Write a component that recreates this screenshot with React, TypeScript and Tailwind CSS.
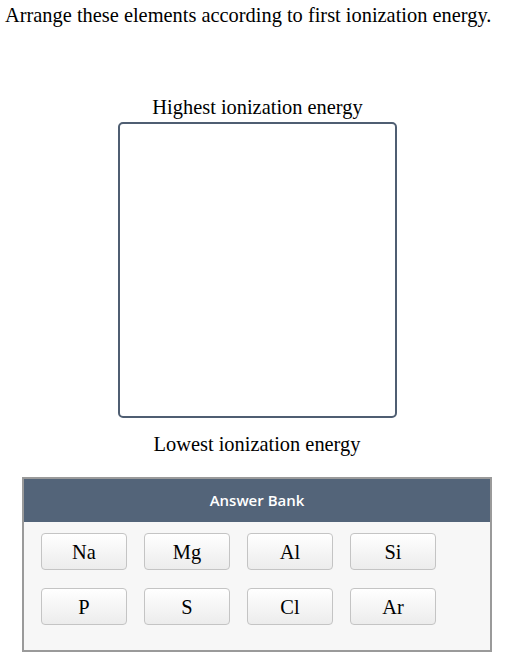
const elements = [
  ["Na", "Mg", "Al", "Si"],
  ["P", "S", "Cl", "Ar"],
];

export default function App() {
  return (
    <div className="w-[513px] h-[652px] bg-white font-['Liberation_Serif',serif] text-black overflow-hidden">
      <p className="pl-[5px] pt-[3px] text-[20.4px] leading-[24px]">
        Arrange these elements according to first ionization energy.
      </p>

      <div className="mt-[68px] flex flex-col items-center">
        <p className="text-[20.4px] leading-[24px] pl-[2px]">Highest ionization energy</p>
        <div className="mt-[3px] ml-[1px] w-[279px] h-[296px] rounded-[5px] border-2 border-[#4f5e72]" />
        <p className="mt-[14px] text-[20.4px] leading-[24px] pl-[1px]">Lowest ionization energy</p>
      </div>

      <div className="mt-[21px] ml-[22px] w-[470px] border-2 border-[#9a9a9a] bg-[#f7f7f7]">
        <div className="h-[43px] bg-[#536479] flex items-center justify-center text-white text-[15px] font-semibold font-['Open_Sans',sans-serif]">
          Answer Bank
        </div>
        <div className="flex flex-col gap-[18px] pl-[17px] pt-[11px] pb-[25px]">
          {elements.map((row, i) => (
            <div key={i} className="flex gap-[17px]">
              {row.map((el) => (
                <button
                  key={el}
                  className="w-[86px] h-[37px] rounded-[4px] border border-[#c4c4c4] bg-gradient-to-b from-white to-[#ececec] text-[20.4px] leading-none pt-[2px]"
                >
                  {el}
                </button>
              ))}
            </div>
          ))}
        </div>
      </div>
    </div>
  );
}
